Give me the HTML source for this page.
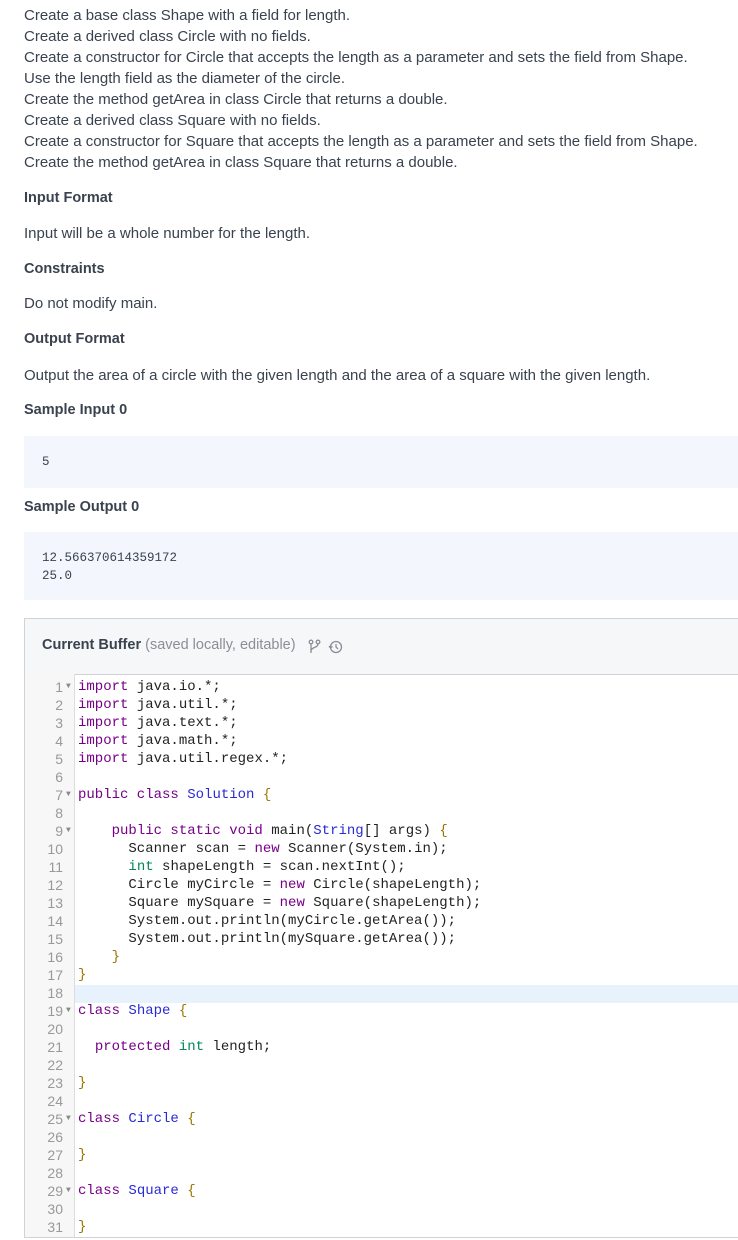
<!DOCTYPE html>
<html><head><style>
body{margin:0;width:738px;height:1240px;background:#fff;font-family:"Liberation Sans",sans-serif;color:#39424e;position:relative;overflow:hidden}
.t{position:absolute;left:24px;font-size:15px;white-space:nowrap}
.h{position:absolute;left:24px;font-size:14.5px;font-weight:bold;color:#39424e}
.box{position:absolute;left:24px;right:0;background:#f3f7fd}
.box pre{margin:0;position:absolute;left:18px;font-family:"Liberation Mono",monospace;font-size:12.5px;line-height:18px;color:#39424e}
.ed{position:absolute;left:24px;top:618px;width:714px;height:620px;border:1px solid #cfd3d8;border-right:none;box-sizing:border-box}
.hd{height:55px;background:#f5f7f9;border-bottom:1px solid #cfd3d8;position:relative}
.gut{position:absolute;left:0;top:55px;width:49px;bottom:0;background:#f7f7f7;border-right:1px solid #ddd}
.code{position:absolute;left:0;top:59px;right:0;font-family:"Liberation Mono",monospace;font-size:14px;line-height:18px}
.ln{position:relative;height:18px;white-space:pre}
.n{position:absolute;left:0;width:38px;text-align:right;color:#999;font-family:"Liberation Sans",sans-serif;font-size:14px}
.a{position:absolute;left:41px;color:#888;font-size:8px}
.c{position:absolute;left:53px;color:#222}
.k{color:#770088}.b{color:#2a2ad6}.y{color:#997700}.i{color:#008855}
.hl{position:absolute;left:50px;right:0;background:#e8f2fd;height:18px}
</style></head><body>
<div class="t" style="top:7px">Create a base class Shape with a field for length.</div>
<div class="t" style="top:28px">Create a derived class Circle with no fields.</div>
<div class="t" style="top:49px">Create a constructor for Circle that accepts the length as a parameter and sets the field from Shape.</div>
<div class="t" style="top:70px">Use the length field as the diameter of the circle.</div>
<div class="t" style="top:91px">Create the method getArea in class Circle that returns a double.</div>
<div class="t" style="top:112px">Create a derived class Square with no fields.</div>
<div class="t" style="top:133px">Create a constructor for Square that accepts the length as a parameter and sets the field from Shape.</div>
<div class="t" style="top:154px">Create the method getArea in class Square that returns a double.</div>
<div class="h" style="top:190px">Input Format</div>
<div class="t" style="top:225px">Input will be a whole number for the length.</div>
<div class="h" style="top:261px">Constraints</div>
<div class="t" style="top:295px">Do not modify main.</div>
<div class="h" style="top:331px">Output Format</div>
<div class="t" style="top:367px">Output the area of a circle with the given length and the area of a square with the given length.</div>
<div class="h" style="top:402px">Sample Input 0</div>
<div class="box" style="top:436px;height:52px"><pre style="top:17px">5</pre></div>
<div class="h" style="top:499px">Sample Output 0</div>
<div class="box" style="top:532px;height:68px"><pre style="top:17px">12.566370614359172
25.0</pre></div>
<div class="ed">
<div class="hd"><span style="position:absolute;left:17px;top:18px;font-size:14.5px"><b>Current Buffer</b> <span style="color:#8a8f96">(saved locally, editable)</span></span>
<svg style="position:absolute;left:283px;top:20px" width="40" height="16" viewBox="0 0 40 16" fill="none" stroke="#8a8f96" stroke-width="1.3"><circle cx="3" cy="3" r="1.8"/><circle cx="10" cy="3" r="1.8"/><path d="M3 5v9M10 5c0 4-7 3-7 7"/><circle cx="28" cy="8" r="5.5"/><path d="M28 5v3l2 2M21 7l1.5 2 2-1.5"/></svg></div>
<div class="gut"></div>
<div class="hl" style="top:366px"></div>
<div class="code">
<div class="ln"><span class="n">1</span><span class="a">▼</span><span class="c"><span class="k">import</span> java.io.*;</span></div>
<div class="ln"><span class="n">2</span><span class="c"><span class="k">import</span> java.util.*;</span></div>
<div class="ln"><span class="n">3</span><span class="c"><span class="k">import</span> java.text.*;</span></div>
<div class="ln"><span class="n">4</span><span class="c"><span class="k">import</span> java.math.*;</span></div>
<div class="ln"><span class="n">5</span><span class="c"><span class="k">import</span> java.util.regex.*;</span></div>
<div class="ln"><span class="n">6</span></div>
<div class="ln"><span class="n">7</span><span class="a">▼</span><span class="c"><span class="k">public class</span> <span class="b">Solution</span> <span class="y">{</span></span></div>
<div class="ln"><span class="n">8</span></div>
<div class="ln"><span class="n">9</span><span class="a">▼</span><span class="c">    <span class="k">public static void</span> main(<span class="b">String</span>[] args) <span class="y">{</span></span></div>
<div class="ln"><span class="n">10</span><span class="c">      Scanner scan = <span class="k">new</span> Scanner(System.in);</span></div>
<div class="ln"><span class="n">11</span><span class="c">      <span class="i">int</span> shapeLength = scan.nextInt();</span></div>
<div class="ln"><span class="n">12</span><span class="c">      Circle myCircle = <span class="k">new</span> Circle(shapeLength);</span></div>
<div class="ln"><span class="n">13</span><span class="c">      Square mySquare = <span class="k">new</span> Square(shapeLength);</span></div>
<div class="ln"><span class="n">14</span><span class="c">      System.out.println(myCircle.getArea());</span></div>
<div class="ln"><span class="n">15</span><span class="c">      System.out.println(mySquare.getArea());</span></div>
<div class="ln"><span class="n">16</span><span class="c">    <span class="y">}</span></span></div>
<div class="ln"><span class="n">17</span><span class="c"><span class="y">}</span></span></div>
<div class="ln"><span class="n">18</span></div>
<div class="ln"><span class="n">19</span><span class="a">▼</span><span class="c"><span class="k">class</span> <span class="b">Shape</span> <span class="y">{</span></span></div>
<div class="ln"><span class="n">20</span></div>
<div class="ln"><span class="n">21</span><span class="c">  <span class="k">protected</span> <span class="i">int</span> length;</span></div>
<div class="ln"><span class="n">22</span></div>
<div class="ln"><span class="n">23</span><span class="c"><span class="y">}</span></span></div>
<div class="ln"><span class="n">24</span></div>
<div class="ln"><span class="n">25</span><span class="a">▼</span><span class="c"><span class="k">class</span> <span class="b">Circle</span> <span class="y">{</span></span></div>
<div class="ln"><span class="n">26</span></div>
<div class="ln"><span class="n">27</span><span class="c"><span class="y">}</span></span></div>
<div class="ln"><span class="n">28</span></div>
<div class="ln"><span class="n">29</span><span class="a">▼</span><span class="c"><span class="k">class</span> <span class="b">Square</span> <span class="y">{</span></span></div>
<div class="ln"><span class="n">30</span></div>
<div class="ln"><span class="n">31</span><span class="c"><span class="y">}</span></span></div>
</div>
</div>
</body></html>
